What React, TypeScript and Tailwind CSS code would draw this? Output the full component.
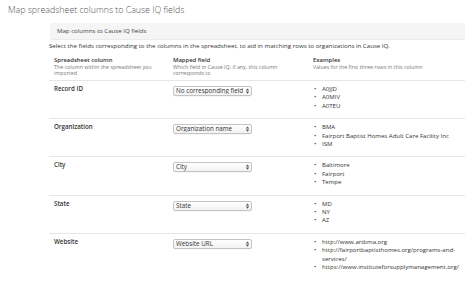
type Row = {
  column: string;
  field: string;
  examples: string[];
};

const rows: Row[] = [
  { column: "Record ID", field: "No corresponding field", examples: ["A0JJD", "A0MIV", "A0TEU"] },
  {
    column: "Organization",
    field: "Organization name",
    examples: ["BMA", "Fairport Baptist Homes Adult Care Facility Inc", "ISM"],
  },
  { column: "City", field: "City", examples: ["Baltimore", "Fairport", "Tempe"] },
  { column: "State", field: "State", examples: ["MD", "NY", "AZ"] },
  {
    column: "Website",
    field: "Website URL",
    examples: [
      "http://www.artbma.org",
      "http://fairportbaptisthomes.org/programs-and-services/",
      "https://www.instituteforsupplymanagement.org/",
    ],
  },
];

function FakeSelect({ value }: { value: string }) {
  return (
    <div className="flex h-[10px] w-[79px] items-center rounded-[2px] border border-[#c4c4c4] bg-gradient-to-b from-white to-[#f2f2f2] pl-[2px] pr-[1px] text-[6.3px] leading-none text-[#333] shadow-[0_0.5px_0.5px_rgba(0,0,0,0.08)]">
      <span className="min-w-0 flex-1 overflow-hidden whitespace-nowrap">{value}</span>
      <svg viewBox="0 0 6 8" className="h-[6px] w-[5px] shrink-0" fill="#555">
        <path d="M3 0.5 L5.3 3.2 H0.7 Z" />
        <path d="M3 7.5 L5.3 4.8 H0.7 Z" />
      </svg>
    </div>
  );
}

export default function App() {
  return (
    <div className="min-h-[283px] w-[474px] bg-white font-['Open_Sans',sans-serif] text-[#333]">
      <h1 className="pl-[8px] pt-[2px] text-[8.8px] font-light leading-[16px] text-[#555]">
        Map spreadsheet columns to Cause IQ fields
      </h1>

      <div className="ml-[49px] mr-[9px] mt-[5px]">
        <div className="ml-[1px] flex h-[17px] items-center rounded-[2px] border-b border-[#ebebeb] bg-[#f5f5f5] pl-[7px] text-[6.1px] text-[#444]">
          Map columns to Cause IQ fields
        </div>
        <p className="pt-[1px] text-[6.15px] leading-[9px]">
          Select the fields corresponding to the columns in the spreadsheet, to aid in matching rows to
          organizations in Cause IQ.
        </p>

        <div className="mt-[6px] grid grid-cols-[119px_140px_1fr] border-b border-[#e6e6e6] pb-[4px] pl-[5px]">
          <div>
            <div className="text-[5.9px] font-semibold leading-[8px]">Spreadsheet column</div>
            <div className="mt-[1px] w-[100px] text-[5.3px] leading-[5.5px] text-[#777]">
              The column within the spreadsheet you imported
            </div>
          </div>
          <div>
            <div className="text-[5.9px] font-semibold leading-[8px]">Mapped field</div>
            <div className="mt-[1px] w-[108px] text-[5.3px] leading-[5.5px] text-[#777]">
              Which field in Cause IQ, if any, this column corresponds to
            </div>
          </div>
          <div>
            <div className="text-[5.9px] font-semibold leading-[8px]">Examples</div>
            <div className="mt-[1px] text-[5.3px] leading-[5.5px] text-[#777]">
              Values for the first three rows in this column
            </div>
          </div>
        </div>

        {rows.map((row, i) => (
          <div
            key={row.column}
            className={`grid grid-cols-[119px_140px_1fr] pl-[5px] pt-[4px] pb-[8px] ${
              i < rows.length - 1 ? "border-b border-[#e6e6e6]" : ""
            }`}
          >
            <div className="text-[6.2px] font-semibold leading-[8.4px]">{row.column}</div>
            <div className="pt-[1px]">
              <FakeSelect value={row.field} />
            </div>
            <ul className="text-[6.05px] leading-[8.4px]">
              {row.examples.map((ex) => (
                <li key={ex} className="flex">
                  <span className="w-[9px] shrink-0 pl-[1px]">•</span>
                  <span className="min-w-0 flex-1 break-words">{ex}</span>
                </li>
              ))}
            </ul>
          </div>
        ))}
      </div>
    </div>
  );
}
